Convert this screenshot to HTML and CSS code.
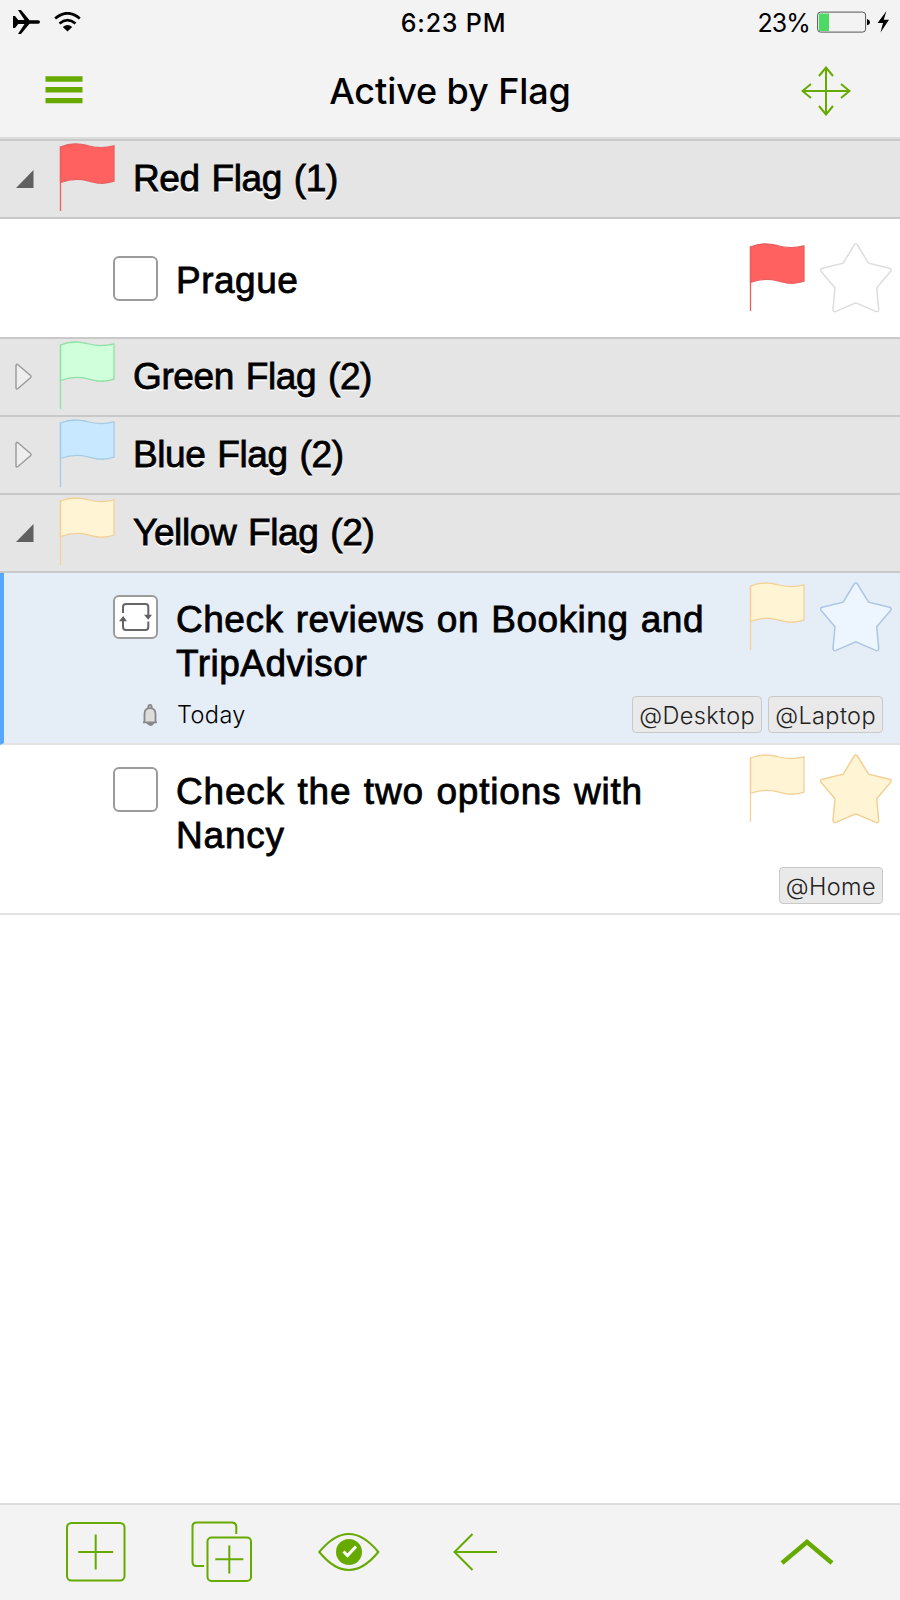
FILE: index.html
```
<!DOCTYPE html>
<html lang="en">

<head>
    <meta charset="UTF-8">
    <meta name="viewport" content="width=device-width, initial-scale=1.0">
    <title>Active by Flag</title>
    <link rel="stylesheet" href="styles.css">
</head>

<body>
    <!-- shared icons -->
    <svg class="symbols">
        <symbol id="flag" viewBox="0 0 56 69">
            <path d="M1.5 4C12 -.5 20 .5 28 2.5C38 5.5 45 5.5 55 2.8V38.2C45 41.5 38 40.5 28 37.6C20 35.5 12 35.5 1.5 39.5Z" />
            <path d="M1.5 3.5V68" />
        </symbol>
        <symbol id="star" viewBox="0 0 72 70">
            <path d="M34.2 2Q35.8 -.4 37.4 2L48.6 20.2L69.5 25.3Q72.2 26.3 70.5 28.6L56.7 44.7L58.7 66.2Q58.5 69.4 55.7 68.4L35.8 59.7L16 68.4Q13.2 69.4 13 66.2L15 44.7L1.2 28.6Q-.6 26.3 2.2 25.3L23.2 20.2Z" />
        </symbol>
    </svg>

    <div class="app">
        <!-- status bar -->
        <div class="status">
            <div class="status-side">
                <svg width="27" height="25" viewBox="0 0 27 25">
                    <path d="M0 6H2L5.2 10L11.5 10L5 0H8L16.5 10.3H25Q27 10.5 27 12Q27 13.5 25 13.7H16.5L8 24H5L11.5 14L5.2 14L2 18H0V12Z" />
                </svg>
                <svg class="wifi" width="27" height="20" viewBox="0 0 27 20">
                    <path d="M1.2 6.5Q13.5 -4 25.8 6.5M5.5 11.5Q13.5 4.8 21.5 11.5" fill="none" stroke="#000" stroke-width="2.7" />
                    <path d="M8.8 15Q13.5 11.2 18.2 15L13.5 19.6Z" />
                </svg>
            </div>
            <div class="clock">6:23 PM</div>
            <div class="status-side status-right">
                <span class="percent">23%</span>
                <svg width="73" height="22" viewBox="0 0 73 22">
                    <rect x=".6" y="1.1" width="48" height="20" rx="3" fill="none" stroke="#555" />
                    <rect x="2" y="2.5" width="10" height="17.5" fill="#4cd964" />
                    <path d="M50 8Q53 9 53 11.2Q53 13.5 50 14.3Z" />
                    <path d="M69.5 0L60.5 12H66L63.5 21.5L72 8.7H66.7Z" />
                </svg>
            </div>
        </div>

        <!-- title bar -->
        <div class="navbar">
            <svg class="green menu" width="38" height="28" viewBox="0 0 38 28">
                <path d="M0.5 3H37.5M0.5 13.8H37.5M0.5 24.6H37.5" stroke-width="5.4" />
            </svg>
            <h1>Active by Flag</h1>
            <svg class="green" width="50" height="50" viewBox="0 0 50 50">
                <path d="M25 1.5V48.5M1.5 25H48.5M18 10L25 1.5L32 10M18 40L25 48.5L32 40M10 18L1.5 25L10 32M40 18L48.5 25L40 32" />
            </svg>
        </div>

        <div class="list">
            <div class="section open">
                <svg class="toggle" width="18" height="18"><path d="M0 18L17.5 0V18Z" /></svg>
                <svg class="flag red"><use href="#flag" /></svg>
                <h2>Red Flag (1)</h2>
            </div>

            <div class="task single">
                <div class="task-main">
                    <div class="checkbox"></div>
                    <div class="task-title">Prague</div>
                    <svg class="flag red"><use href="#flag" /></svg>
                    <svg class="star"><use href="#star" /></svg>
                </div>
            </div>

            <div class="section">
                <svg class="toggle" width="18" height="28"><path d="M1 2.5Q1 .5 3 1.8L15.5 12.5Q16.8 13.5 15.5 14.7L3 25.5Q1 26.8 1 24.8Z" /></svg>
                <svg class="flag mint"><use href="#flag" /></svg>
                <h2>Green Flag (2)</h2>
            </div>

            <div class="section">
                <svg class="toggle" width="18" height="28"><path d="M1 2.5Q1 .5 3 1.8L15.5 12.5Q16.8 13.5 15.5 14.7L3 25.5Q1 26.8 1 24.8Z" /></svg>
                <svg class="flag blue"><use href="#flag" /></svg>
                <h2>Blue Flag (2)</h2>
            </div>

            <div class="section open">
                <svg class="toggle" width="18" height="18"><path d="M0 18L17.5 0V18Z" /></svg>
                <svg class="flag yellow"><use href="#flag" /></svg>
                <h2>Yellow Flag (2)</h2>
            </div>

            <div class="task selected">
                <div class="task-main">
                    <div class="checkbox">
                        <svg width="33" height="30" viewBox="0 0 33 30">
                            <path d="M4 11V5Q4 2 7 2H26.5Q29.3 2 29.3 5V13M29.3 19.5V25Q29.3 28 26.5 28H7Q4 28 4 25V18" fill="none" stroke="#666" stroke-width="2" />
                            <path d="M25 12.7H33L29.2 17.7ZM0 19.2H8L4.2 14Z" fill="#606060" />
                        </svg>
                    </div>
                    <div class="task-title">Check reviews on Booking and TripAdvisor</div>
                    <svg class="flag yellow"><use href="#flag" /></svg>
                    <svg class="star"><use href="#star" /></svg>
                </div>
                <div class="task-meta">
                    <svg class="bell" width="16" height="22" viewBox="0 0 16 22">
                        <path d="M1 18.3H15M2.5 18V10Q2.5 4.2 8 4.2Q13.5 4.2 13.5 10V18M6.3 4Q6 1 8 1Q10 1 9.7 4" />
                        <path d="M6 19.5Q9 22.5 11 19.5Z" />
                    </svg>
                    <span class="due">Today</span>
                    <span class="tag">@Desktop</span>
                    <span class="tag">@Laptop</span>
                </div>
            </div>

            <div class="task">
                <div class="task-main">
                    <div class="checkbox"></div>
                    <div class="task-title wide">Check the two options with Nancy</div>
                    <svg class="flag yellow"><use href="#flag" /></svg>
                    <svg class="star yellow"><use href="#star" /></svg>
                </div>
                <div class="task-meta">
                    <span class="tag">@Home</span>
                </div>
            </div>
        </div>

        <!-- bottom toolbar -->
        <div class="toolbar">
            <svg class="green" width="60" height="60" viewBox="0 0 60 60">
                <rect x="1" y="1" width="57.5" height="57.5" rx="4.5" />
                <path d="M29.7 12.5V47.5M12.2 30H47.2" />
            </svg>
            <svg class="green" width="62" height="62" viewBox="0 0 62 62">
                <path d="M45.3 13V6Q45.3 1.5 41 1.5H5.5Q1.5 1.5 1.5 5.5V41Q1.5 45 5.5 45H13" />
                <rect x="16.5" y="16.5" width="43.5" height="43.5" rx="4" />
                <path d="M38.3 24.5V52.5M24.3 38.3H52.3" />
            </svg>
            <svg class="green" width="62" height="40" viewBox="0 0 62 40">
                <path d="M1.3 20Q30.8 -16 60.3 20Q30.8 56 1.3 20Z" />
                <circle class="pupil" cx="31" cy="20" r="13" />
                <path class="tick" d="M25.5 19.5L29.5 23.5L38 14.5" />
            </svg>
            <svg class="green back" width="45" height="40" viewBox="0 0 45 40">
                <path d="M44 20H1.5M19.5 2L1.5 20L19.5 38" />
            </svg>
            <svg class="green up" width="54" height="28" viewBox="0 0 54 28">
                <path d="M2 25L27 4L52 25" stroke-width="4.5" />
            </svg>
        </div>
    </div>
</body>

</html>
```

FILE: styles.css
```
/* base */

* {
    box-sizing: border-box;
}

body {
    margin: 0;
    background: #fff;
    color: #000;
    font-family: Inter, "Liberation Sans", sans-serif;
}

svg {
    flex: none;
    display: block;
}

.symbols {
    display: none;
}

.app {
    display: flex;
    flex-direction: column;
    width: 900px;
    height: 1600px;
}

.green {
    fill: none;
    stroke: #66aa00;
    stroke-width: 2;
}

/* status bar */

.status {
    display: flex;
    align-items: center;
    height: 44px;
    padding: 0 10px 0 13px;
    background: #f3f3f3;
    font-size: 25px;
}

.status-side {
    flex: 1;
    display: flex;
    align-items: center;
    gap: 14px;
}

.status-right {
    justify-content: flex-end;
    gap: 7px;
}

.clock {
    padding: 2px 0 0 4px;
    font-weight: 500;
    letter-spacing: 0.8px;
}

.percent {
    padding-top: 2px;
    letter-spacing: -0.9px;
}

/* title bar */

.navbar {
    display: flex;
    align-items: center;
    justify-content: space-between;
    height: 95px;
    padding: 0 49px 0 45px;
    background: #f3f3f3;
    border-bottom: 2px solid #dcdcdc;
}

.navbar .menu {
    margin-bottom: 2px;
}

.navbar h1 {
    margin: 0;
    padding: 1px 0 0 16px;
    font-size: 36px;
    font-weight: 550;
    letter-spacing: -0.1px;
}

/* group headers */

.list {
    flex: 1;
}

.section {
    display: flex;
    align-items: flex-start;
    height: 78px;
    padding-left: 15px;
    background: #e5e5e5;
    border-top: 2px solid #c9c9c9;
}

.section.open {
    height: 80px;
    border-bottom: 2px solid #c9c9c9;
}

.section h2 {
    margin: 16px 0 0 18px;
    font: 37px/44px "Liberation Sans", sans-serif;
    letter-spacing: -0.4px;
    word-spacing: 2px;
    -webkit-text-stroke: 0.8px #000;
    text-shadow: 0 2px 1px #fff;
}

.toggle {
    margin: 24px 26px 0 0;
    fill: #eee;
    stroke: #999;
    stroke-width: 1.4;
}

.open .toggle {
    margin: 29px 25px 0 1px;
    fill: #606060;
    stroke: none;
}

/* flags and stars */

.flag {
    width: 56px;
    height: 69px;
    margin-top: 2px;
    stroke-width: 1.3;
}

.star {
    width: 72px;
    height: 70px;
    fill: #fff;
    stroke: #ddd;
    stroke-width: 1.5;
}

.red {
    fill: #ff6060;
    stroke: #e86060;
}

.mint {
    fill: #d0ffdc;
    stroke: #8fe0a3;
}

.blue {
    fill: #c8e8ff;
    stroke: #a5cbe6;
}

.yellow {
    fill: #fff5d5;
    stroke: #f3d097;
}

/* tasks */

.task {
    height: 170px;
    padding: 9px 8px 0 113px;
    border-bottom: 2px solid #e3e3e3;
}

.task.single {
    height: 118px;
    padding-top: 24px;
    border: none;
}

.task.selected {
    height: 172px;
    padding-left: 109px;
    background: #e5edf7;
    border-left: 4px solid #57a8fc;
}

.selected .star {
    fill: #edf5ff;
    stroke: #acc6e3;
}

.task-main {
    display: flex;
    align-items: flex-start;
}

.task-main .flag {
    margin: 0 15px 0 0;
}

.checkbox {
    flex: none;
    display: flex;
    align-items: center;
    justify-content: center;
    width: 45px;
    height: 45px;
    margin-top: 13px;
    background: #fff;
    border: 2px solid #9b9b9b;
    border-radius: 6px;
}

.selected .checkbox {
    height: 44px;
}

.task-title {
    width: 591px;
    height: 88px;
    padding: 16px 20px 0 18px;
    font: 37px/44px "Liberation Sans", sans-serif;
    letter-spacing: 0.5px;
    word-spacing: 1.5px;
    -webkit-text-stroke: 0.8px #000;
}

.task-title.wide {
    padding-right: 50px;
    letter-spacing: 0.8px;
}

.task-meta {
    display: flex;
    align-items: center;
    justify-content: flex-end;
    gap: 6px;
    padding: 25px 9px 0 29px;
    font-size: 23.5px;
    font-weight: 300;
    letter-spacing: 0.4px;
}

.bell {
    margin-top: 1px;
    fill: #ddd;
    stroke: #888;
    stroke-width: 1.8;
}

.due {
    flex: 1;
    margin-left: 13px;
    padding-top: 2px;
    line-height: 36px;
}

.tag {
    height: 37px;
    padding: 0 6px;
    background: #e9e9e9;
    border: 1px solid #c9c9c9;
    border-radius: 4px;
    color: #222;
    line-height: 37px;
}

/* toolbar */

.toolbar {
    display: flex;
    align-items: center;
    gap: 65px;
    height: 97px;
    padding: 0 66px 1px;
    background: #f3f3f3;
    border-top: 2px solid #dcdcdc;
}

.toolbar .back {
    margin-left: 8px;
}

.toolbar .up {
    margin-left: auto;
}

.pupil {
    fill: #66aa00;
    stroke: none;
}

.tick {
    stroke: #fff;
    stroke-width: 3;
}
```
